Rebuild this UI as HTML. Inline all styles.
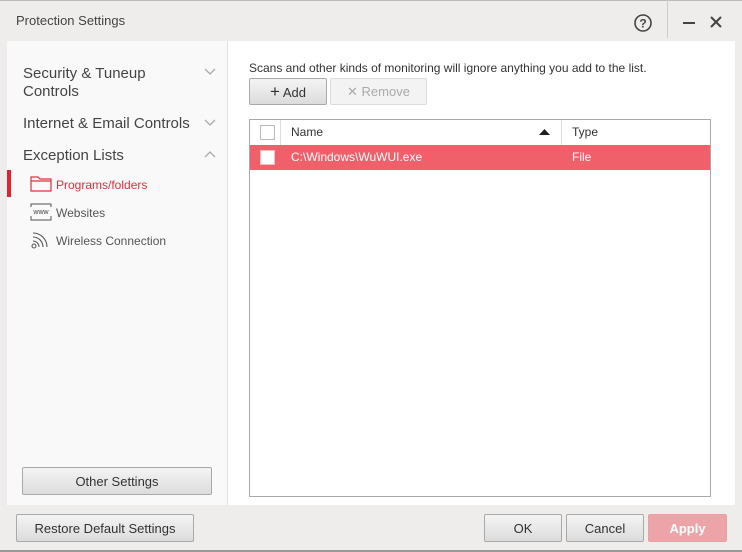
<!DOCTYPE html><html><head><style>
body{margin:0;width:742px;height:552px;background:#eeedeb;font-family:"Liberation Sans",sans-serif;position:relative;overflow:hidden;color:#333}
.a{position:absolute}
.btn{position:absolute;border:1px solid #a9a9a9;border-radius:2px;background:linear-gradient(#f4f4f4,#dcdcdc);font-size:13px;color:#333;text-align:center;box-sizing:border-box}
.nav{font-size:15px;color:#444}
.sub{font-size:12px;color:#555}
</style></head><body>
<div class="a" style="left:0;top:0;width:742px;height:1px;background:#bbb"></div>
<div class="a" style="left:16px;top:13px;font-size:13px;color:#444">Protection Settings</div>
<svg class="a" style="left:633px;top:13px" width="20" height="20"><circle cx="10" cy="10" r="8" fill="none" stroke="#444" stroke-width="1.6"/><text x="10" y="14.5" font-size="12" font-weight="bold" text-anchor="middle" fill="#444" font-family="Liberation Sans">?</text></svg>
<div class="a" style="left:667px;top:0;width:1px;height:38px;background:#ccc"></div>
<div class="a" style="left:683px;top:22px;width:12px;height:2px;background:#444"></div>
<svg class="a" style="left:710px;top:16px" width="12" height="12"><path d="M1 1L11 11M11 1L1 11" stroke="#444" stroke-width="2"/></svg>
<div class="a" style="left:7px;top:41px;width:220px;height:464px;background:#f9f9f9"></div>
<div class="a" style="left:227px;top:41px;width:1px;height:464px;background:#e2e2e2"></div>
<div class="a" style="left:228px;top:41px;width:507px;height:464px;background:#fff"></div>
<div class="a nav" style="left:23px;top:65px;line-height:18px">Security &amp; Tuneup<br>Controls</div>
<div class="a nav" style="left:23px;top:115px">Internet &amp; Email Controls</div>
<div class="a nav" style="left:23px;top:147px">Exception Lists</div>
<svg class="a" style="left:204px;top:68px" width="12" height="8"><path d="M1 1L6 6L11 1" fill="none" stroke="#aaa" stroke-width="1.3"/></svg>
<svg class="a" style="left:204px;top:119px" width="12" height="8"><path d="M1 1L6 6L11 1" fill="none" stroke="#aaa" stroke-width="1.3"/></svg>
<svg class="a" style="left:204px;top:150px" width="12" height="8"><path d="M1 7L6 2L11 7" fill="none" stroke="#aaa" stroke-width="1.3"/></svg>
<div class="a" style="left:7px;top:170px;width:4px;height:27px;background:#e8202e"></div>
<svg class="a" style="left:30px;top:175px" width="22" height="17"><path d="M1 2H8L10 4H21V16H1Z M1 6H21" fill="none" stroke="#e0303c" stroke-width="1.2"/></svg>
<div class="a sub" style="left:56px;top:178px;color:#e0303c">Programs/folders</div>
<svg class="a" style="left:30px;top:203px" width="22" height="18"><path d="M1 4V1H21V4M1 13V17H21V13" fill="none" stroke="#555" stroke-width="1"/><text x="11" y="11" font-size="7" text-anchor="middle" fill="#444" font-family="Liberation Sans">www</text></svg>
<div class="a sub" style="left:56px;top:206px">Websites</div>
<svg class="a" style="left:31px;top:231px" width="20" height="18"><circle cx="3" cy="15" r="2" fill="none" stroke="#555"/><path d="M2 10A6 6 0 0 1 8 16M2 6A10 10 0 0 1 12 16M2 2A14 14 0 0 1 16 16" fill="none" stroke="#555" stroke-width="1.1"/></svg>
<div class="a sub" style="left:56px;top:234px">Wireless Connection</div>
<div class="btn" style="left:22px;top:467px;width:190px;height:28px;line-height:27px">Other Settings</div>
<div class="a" style="left:249px;top:61px;font-size:12px;color:#333">Scans and other kinds of monitoring will ignore anything you add to the list.</div>
<div class="btn" style="left:249px;top:78px;width:78px;height:27px;line-height:26px"><span style="font-size:17px">+</span> Add</div>
<div class="btn" style="left:330px;top:78px;width:97px;height:27px;line-height:26px;color:#aaa;border-color:#ddd;background:#f3f3f3">✕ Remove</div>
<div class="a" style="left:249px;top:119px;width:460px;height:376px;border:1px solid #aaa;background:#fff"></div>
<div class="a" style="left:250px;top:120px;width:460px;height:25px;border-bottom:1px solid #ddd"></div>
<div class="a" style="left:280px;top:120px;width:1px;height:25px;background:#ddd"></div>
<div class="a" style="left:561px;top:120px;width:1px;height:25px;background:#ddd"></div>
<div class="a" style="left:260px;top:125px;width:13px;height:13px;border:1px solid #bbb"></div>
<div class="a" style="left:291px;top:125px;font-size:12px">Name</div>
<svg class="a" style="left:539px;top:128px" width="11" height="7"><path d="M0 7L5.5 1L11 7Z" fill="#222"/></svg>
<div class="a" style="left:572px;top:125px;font-size:12px">Type</div>
<div class="a" style="left:250px;top:145px;width:460px;height:25px;background:#f0606a"></div>
<div class="a" style="left:260px;top:150px;width:13px;height:13px;border:1px solid #fbb;background:#fff"></div>
<div class="a" style="left:291px;top:150px;font-size:12px;color:#fff">C:\Windows\WuWUI.exe</div>
<div class="a" style="left:572px;top:150px;font-size:12px;color:#fff">File</div>
<div class="btn" style="left:16px;top:514px;width:178px;height:28px;line-height:27px">Restore Default Settings</div>
<div class="btn" style="left:484px;top:514px;width:78px;height:28px;line-height:27px">OK</div>
<div class="btn" style="left:566px;top:514px;width:78px;height:28px;line-height:27px">Cancel</div>
<div class="btn" style="left:648px;top:514px;width:79px;height:28px;line-height:27px;background:#eda4a8;border-color:#e9a0a4;color:#fff;font-weight:bold">Apply</div>
<div class="a" style="left:0;top:550px;width:742px;height:2px;background:#999"></div>
</body></html>
